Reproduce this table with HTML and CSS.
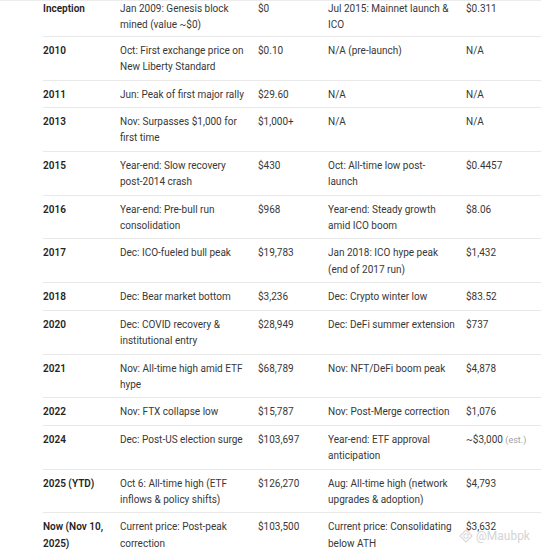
FILE: index.html
```html
<!DOCTYPE html>
<html>
<head>
<meta charset="utf-8">
<link rel="stylesheet" href="styles.css">
</head>
<body>
<div class="frame">
  <div class="scroller">
    <table class="prices">
      <colgroup>
        <col class="c-period"><col class="c-event"><col class="c-price"><col class="c-event"><col class="c-eth">
      </colgroup>
      <tbody>
        <tr class="first"><td class="period">Inception</td><td>Jan 2009: Genesis block mined (value ~$0)</td><td>$0</td><td>Jul 2015: Mainnet launch &amp; ICO</td><td>$0.311</td></tr>
        <tr><td class="period">2010</td><td>Oct: First exchange price on New Liberty Standard</td><td>$0.10</td><td>N/A (pre-launch)</td><td>N/A</td></tr>
        <tr><td class="period">2011</td><td>Jun: Peak of first major rally</td><td>$29.60</td><td>N/A</td><td>N/A</td></tr>
        <tr><td class="period">2013</td><td>Nov: Surpasses $1,000 for first time</td><td>$1,000+</td><td>N/A</td><td>N/A</td></tr>
        <tr><td class="period">2015</td><td>Year-end: Slow recovery post-2014 crash</td><td>$430</td><td>Oct: All-time low post-<br>launch</td><td>$0.4457</td></tr>
        <tr><td class="period">2016</td><td>Year-end: Pre-bull run consolidation</td><td>$968</td><td>Year-end: Steady growth amid ICO boom</td><td>$8.06</td></tr>
        <tr><td class="period">2017</td><td>Dec: ICO-fueled bull peak</td><td>$19,783</td><td>Jan 2018: ICO hype peak (end of 2017 run)</td><td>$1,432</td></tr>
        <tr><td class="period">2018</td><td>Dec: Bear market bottom</td><td>$3,236</td><td>Dec: Crypto winter low</td><td>$83.52</td></tr>
        <tr><td class="period">2020</td><td>Dec: COVID recovery &amp; institutional entry</td><td>$28,949</td><td>Dec: DeFi summer extension</td><td>$737</td></tr>
        <tr><td class="period">2021</td><td>Nov: All-time high amid ETF hype</td><td>$68,789</td><td>Nov: NFT/DeFi boom peak</td><td>$4,878</td></tr>
        <tr><td class="period">2022</td><td>Nov: FTX collapse low</td><td>$15,787</td><td>Nov: Post-Merge correction</td><td>$1,076</td></tr>
        <tr><td class="period">2024</td><td>Dec: Post-US election surge</td><td>$103,697</td><td>Year-end: ETF approval anticipation</td><td>~$3,000 <span class="note">(est.)</span></td></tr>
        <tr><td class="period">2025 (YTD)</td><td>Oct 6: All-time high (ETF inflows &amp; policy shifts)</td><td>$126,270</td><td>Aug: All-time high (network upgrades &amp; adoption)</td><td>$4,793</td></tr>
        <tr><td class="period">Now (Nov 10, 2025)</td><td>Current price: Post-peak correction</td><td>$103,500</td><td>Current price: Consolidating below ATH</td><td>$3,632</td></tr>
      </tbody>
    </table>
  </div>
  <div class="watermark">
    <svg width="14" height="14" viewBox="0 0 14 14" aria-hidden="true"><path d="M7 1 L13 7 L7 13 L1 7 Z" fill="none" stroke="#d9d9d9" stroke-width="1.2"/><circle cx="7" cy="7" r="2.2" fill="none" stroke="#d9d9d9" stroke-width="1.1"/></svg>
    <span>@Maubpk</span>
  </div>
</div>
</body>
</html>
```

FILE: styles.css
```css
html, body {
  margin: 0;
  padding: 0;
  background: #ffffff;
}

body {
  font-family: Roboto, "Liberation Sans", Arial, sans-serif;
  font-size: 10px;
  color: #383838;
}

.frame {
  position: relative;
  width: 541px;
  height: 552px;
  overflow: hidden;
  border-top: 1px solid #ececec;
  box-sizing: border-box;
}

.scroller {
  padding-left: 43px;
  overflow: hidden;
}

.prices {
  border-collapse: collapse;
  table-layout: fixed;
  width: 540px;
}

.c-period { width: 77px; }
.c-event { width: 138px; }
.c-price { width: 70px; }
.c-eth { width: 117px; }

.prices td {
  vertical-align: top;
  line-height: 16.4px;
  padding: 6px 10px 4px 0;
  border-bottom: 1px solid #e8e8e8;
  text-align: left;
}

.prices tr.first td {
  padding-top: 0;
  padding-bottom: 2px;
}

.prices td.period {
  font-weight: 600;
  color: #242424;
}

.note {
  color: #a3a3a3;
  font-size: 9px;
}

.watermark {
  position: absolute;
  left: 459px;
  top: 528px;
  display: flex;
  align-items: center;
  gap: 3px;
  color: #d4d4d4;
  font-size: 12px;
}
```
